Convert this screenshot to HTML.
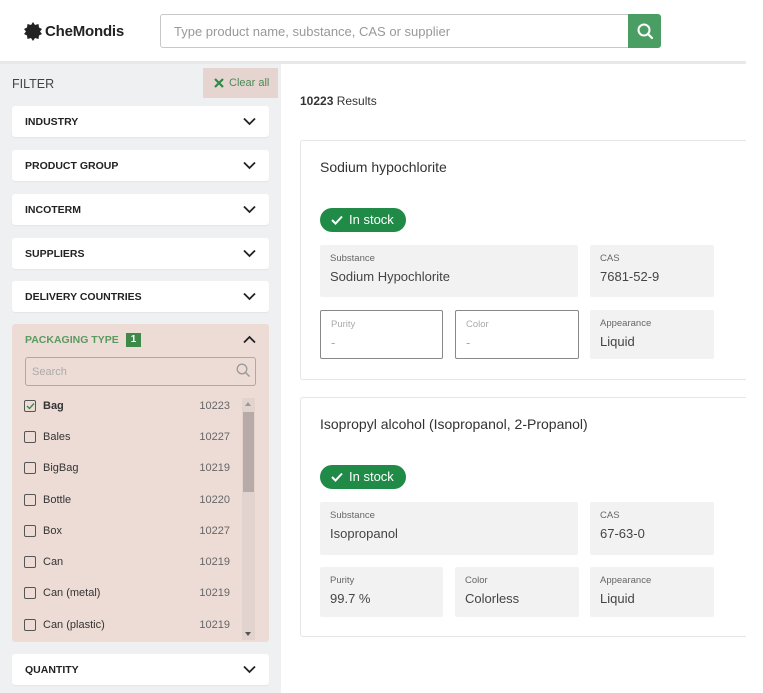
<!DOCTYPE html><html><head><style>
*{box-sizing:border-box;margin:0;padding:0}
body{width:763px;height:693px;overflow:hidden;background:#fff;font-family:"Liberation Sans",sans-serif;color:#333;position:relative}
.a{position:absolute}
.acc{position:absolute;left:12px;width:257px;height:31px;background:#fff;border-radius:3px;font-size:10.5px;font-weight:bold;color:#222;padding:10px 0 0 13px;box-shadow:0 1px 1px rgba(0,0,0,.05)}
.chev{position:absolute;right:13px;top:11px}
.row{position:absolute;left:24px;width:210px;font-size:11px;color:#333}
.row .cb{position:absolute;left:0;top:0;width:12px;height:12px;border:1.3px solid #555;border-radius:2px}
.row .l{position:absolute;left:19px;top:0}
.row .n{position:absolute;right:4px;top:0;color:#666}
.card{position:absolute;left:300px;width:460px;height:240px;border:1px solid #e6e6e6;border-radius:3px;background:#fff}
.ttl{position:absolute;left:19px;font-size:14px;color:#333}
.badge{position:absolute;left:19px;width:86px;height:24px;background:#1f8b47;border-radius:12px;color:#fff;font-size:13px;padding:4px 0 0 29px}
.badge svg{position:absolute;left:11px;top:7px}
.box{position:absolute;background:#f2f2f2;border-radius:2px;padding:8px 10px}
.box.o{background:#fff;border:1px solid #888}
.box .k{font-size:9.5px;color:#666}
.box .v{font-size:13px;color:#444;margin-top:5px}
.box.o .k,.box.o .v{color:#aaa}
</style></head><body>
<svg class="a" style="left:23px;top:21px" width="20" height="20" viewBox="0 0 20 20"><path fill="#222" d="M10 1l2 3 3.5-1 .5 3.5L19 8l-2 2.5 2 2.5-3 1.5-.5 3.5-3.5-1-2 3-2-3-3.5 1-.5-3.5L1 13l2-2.5L1 8l3-1.5.5-3.5 3.5 1z"/></svg>
<div class="a" style="left:45px;top:23px;font-size:15px;font-weight:bold;color:#222;letter-spacing:-0.2px">CheMondis</div>
<div class="a" style="left:160px;top:14px;width:470px;height:34px;border:1px solid #c8c8c8;border-radius:3px 0 0 3px;font-size:13px;color:#999;padding:9px 0 0 13px">Type product name, substance, CAS or supplier</div>
<div class="a" style="left:628px;top:14px;width:33px;height:34px;background:#4a9e64;border-radius:0 3px 3px 0"><svg style="position:absolute;left:8px;top:8px" width="18" height="18" viewBox="0 0 18 18"><circle cx="8" cy="8" r="5.5" fill="none" stroke="#fff" stroke-width="2"/><path d="M12 12l4 4" stroke="#fff" stroke-width="2.2" stroke-linecap="round"/></svg></div>
<div class="a" style="left:0;top:61px;width:746px;height:3px;background:#e8e8e8"></div>
<div class="a" style="left:0;top:64px;width:281px;height:629px;background:#eef0f2"></div>
<div class="a" style="left:12px;top:77px;font-size:12.5px;color:#444">FILTER</div>
<div class="a" style="left:203px;top:68px;width:75px;height:30px;background:#e6d4d0;font-size:11px;color:#4a8a55;padding:9px 0 0 26px"><svg style="position:absolute;left:11px;top:10px" width="10" height="10"><path d="M1 1l8 8M9 1l-8 8" stroke="#2e8b45" stroke-width="2.2"/></svg>Clear all</div>
<div class="acc" style="top:106px">INDUSTRY<svg class="chev" width="13" height="9"><path d="M1 1.5l5.5 5.5 5.5-5.5" fill="none" stroke="#222" stroke-width="1.8"/></svg></div>
<div class="acc" style="top:150px">PRODUCT GROUP<svg class="chev" width="13" height="9"><path d="M1 1.5l5.5 5.5 5.5-5.5" fill="none" stroke="#222" stroke-width="1.8"/></svg></div>
<div class="acc" style="top:194px">INCOTERM<svg class="chev" width="13" height="9"><path d="M1 1.5l5.5 5.5 5.5-5.5" fill="none" stroke="#222" stroke-width="1.8"/></svg></div>
<div class="acc" style="top:238px">SUPPLIERS<svg class="chev" width="13" height="9"><path d="M1 1.5l5.5 5.5 5.5-5.5" fill="none" stroke="#222" stroke-width="1.8"/></svg></div>
<div class="acc" style="top:281px">DELIVERY COUNTRIES<svg class="chev" width="13" height="9"><path d="M1 1.5l5.5 5.5 5.5-5.5" fill="none" stroke="#222" stroke-width="1.8"/></svg></div>
<div class="a" style="left:12px;top:324px;width:257px;height:318px;background:#eddcd6;border-radius:3px"></div>
<div class="a" style="left:25px;top:334px;font-size:10.5px;font-weight:bold;color:#5a9a5f">PACKAGING TYPE</div>
<div class="a" style="left:126px;top:333px;width:15px;height:14px;background:#3d8a48;color:#fff;font-size:10px;font-weight:bold;text-align:center;line-height:14px">1</div>
<svg class="a" style="left:243px;top:335px" width="13" height="9"><path d="M1 7.5l5.5-5.5 5.5 5.5" fill="none" stroke="#222" stroke-width="1.8"/></svg>
<div class="a" style="left:25px;top:357px;width:231px;height:29px;border:1px solid #aaa;border-radius:3px;font-size:11px;color:#aaa;padding:8px 0 0 6px">Search</div>
<svg class="a" style="left:236px;top:363px" width="15" height="15"><circle cx="6" cy="6" r="4.8" fill="none" stroke="#999" stroke-width="1.3"/><path d="M9.5 9.5l4 4" stroke="#999" stroke-width="1.4"/></svg>
<div class="row" style="top:400px"><span class="cb"><svg style="position:absolute;left:1px;top:1px" width="9" height="8"><path d="M1 4l2.5 2.5L8 1.5" fill="none" stroke="#3d8a48" stroke-width="1.4"/></svg></span><span class="l" style="font-weight:bold">Bag</span><span class="n">10223</span></div>
<div class="row" style="top:431px"><span class="cb"></span><span class="l">Bales</span><span class="n">10227</span></div>
<div class="row" style="top:462px"><span class="cb"></span><span class="l">BigBag</span><span class="n">10219</span></div>
<div class="row" style="top:494px"><span class="cb"></span><span class="l">Bottle</span><span class="n">10220</span></div>
<div class="row" style="top:525px"><span class="cb"></span><span class="l">Box</span><span class="n">10227</span></div>
<div class="row" style="top:556px"><span class="cb"></span><span class="l">Can</span><span class="n">10219</span></div>
<div class="row" style="top:587px"><span class="cb"></span><span class="l">Can (metal)</span><span class="n">10219</span></div>
<div class="row" style="top:619px"><span class="cb"></span><span class="l">Can (plastic)</span><span class="n">10219</span></div>
<div class="a" style="left:242px;top:398px;width:13px;height:242px;background:#e3d3ce"></div>
<div class="a" style="left:243px;top:412px;width:11px;height:80px;background:#b8aaa6"></div>
<div class="a" style="left:245px;top:402px;width:0;height:0;border:3px solid transparent;border-bottom:4px solid #999;border-top:0"></div>
<div class="a" style="left:245px;top:632px;width:0;height:0;border:3px solid transparent;border-top:4px solid #555;border-bottom:0"></div>
<div class="acc" style="top:654px">QUANTITY<svg class="chev" width="13" height="9"><path d="M1 1.5l5.5 5.5 5.5-5.5" fill="none" stroke="#222" stroke-width="1.8"/></svg></div>
<div class="a" style="left:300px;top:94px;font-size:12px;color:#333"><b>10223</b> Results</div>

<div class="card" style="top:140px">
<div class="ttl" style="top:18px">Sodium hypochlorite</div>
<div class="badge" style="top:67px"><svg width="12" height="10"><path d="M1 5l3.5 3.5L11 1.5" fill="none" stroke="#fff" stroke-width="2"/></svg>In stock</div>
<div class="box" style="left:19px;top:104px;width:258px;height:52px"><div class="k">Substance</div><div class="v">Sodium Hypochlorite</div></div>
<div class="box" style="left:289px;top:104px;width:124px;height:52px"><div class="k">CAS</div><div class="v">7681-52-9</div></div>
<div class="box o" style="left:19px;top:169px;width:123px;height:49px"><div class="k">Purity</div><div class="v">-</div></div>
<div class="box o" style="left:154px;top:169px;width:124px;height:49px"><div class="k">Color</div><div class="v">-</div></div>
<div class="box" style="left:289px;top:169px;width:124px;height:49px"><div class="k">Appearance</div><div class="v">Liquid</div></div>
</div>
<div class="card" style="top:397px">
<div class="ttl" style="top:18px">Isopropyl alcohol (Isopropanol, 2-Propanol)</div>
<div class="badge" style="top:67px"><svg width="12" height="10"><path d="M1 5l3.5 3.5L11 1.5" fill="none" stroke="#fff" stroke-width="2"/></svg>In stock</div>
<div class="box" style="left:19px;top:104px;width:258px;height:53px"><div class="k">Substance</div><div class="v">Isopropanol</div></div>
<div class="box" style="left:289px;top:104px;width:124px;height:53px"><div class="k">CAS</div><div class="v">67-63-0</div></div>
<div class="box" style="left:19px;top:169px;width:123px;height:50px"><div class="k">Purity</div><div class="v">99.7 %</div></div>
<div class="box" style="left:154px;top:169px;width:124px;height:50px"><div class="k">Color</div><div class="v">Colorless</div></div>
<div class="box" style="left:289px;top:169px;width:124px;height:50px"><div class="k">Appearance</div><div class="v">Liquid</div></div>
</div>
<div class="a" style="left:746px;top:0;width:17px;height:693px;background:#fff"></div>
</body></html>
